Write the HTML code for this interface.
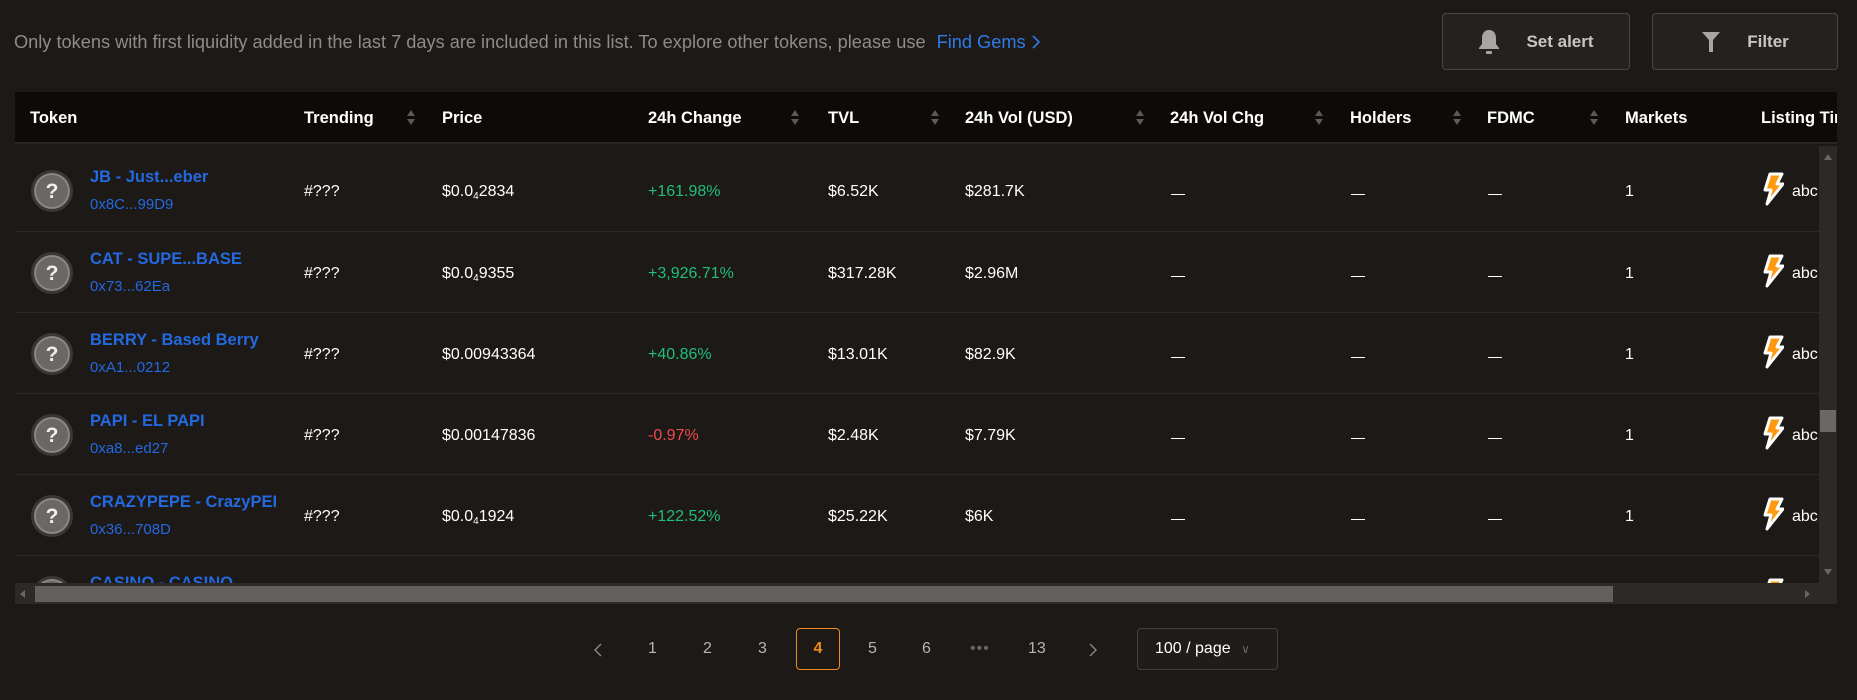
<!DOCTYPE html>
<html><head><meta charset="utf-8"><style>
*{box-sizing:border-box;margin:0;padding:0}
body{width:1857px;height:700px;background:#1c1917;font-family:"Liberation Sans",sans-serif;color:#fff;position:relative;overflow:hidden}
.intro{position:absolute;left:14px;top:32px;font-size:18.2px;color:#8f8b87;white-space:nowrap}
.intro a{color:#2f7bea;margin-left:6px}
.btn{position:absolute;top:13px;height:57px;border:1px solid #4a4643;border-radius:4px;background:#24211f;color:#c9c6c2;font-size:17px;font-weight:bold;display:flex;align-items:center;justify-content:center;gap:26px}
.tbl{position:absolute;left:15px;top:92px;width:1822px;height:512px;overflow:hidden;background:#1c1917}
.hdr{position:absolute;left:0;top:0;width:1822px;height:52px;background:#0d0a07;border-bottom:2px solid #2a2623}
.h{position:absolute;top:17px;font-size:16.5px;font-weight:bold;color:#fff;white-space:nowrap}
.ar{position:absolute;top:17px;width:8px;height:18px}
.ar:before{content:"";position:absolute;left:0;top:1px;border:4px solid transparent;border-bottom:6px solid #5d5955;border-top:0}
.ar:after{content:"";position:absolute;left:0;top:10px;border:4px solid transparent;border-top:6px solid #5d5955;border-bottom:0}
.row{position:absolute;left:0;width:1804px;height:81px;border-top:1px solid #2b2724}
.c{position:absolute;top:33px;font-size:16px;white-space:nowrap;color:#fff}
.ic{position:absolute;left:16px;top:20px;width:42px;height:42px;border-radius:50%;background:#6a6764;border:3px solid #3a3735;box-shadow:inset 0 0 0 2px #8a8784}
.ic span{position:absolute;left:0;right:0;top:7px;text-align:center;font-weight:bold;font-size:21px;color:#eee}
.nm{position:absolute;left:75px;top:18px;font-size:16.5px;font-weight:bold;color:#2369e0;white-space:nowrap}
.ad{position:absolute;left:75px;top:46px;font-size:15px;color:#2369e0}
.g{color:#1fbf7a}.r{color:#ef4b4f}
.dash{position:absolute;top:44px;width:14px;height:1px;background:#fff}
sub{font-size:10px;vertical-align:-3px}
.pg{position:absolute;top:640px;font-size:16px;color:#b8b4b0}
</style></head><body>
<div class="intro">Only tokens with first liquidity added in the last 7 days are included in this list. To explore other tokens, please use <a>Find Gems <svg width="10" height="14" viewBox="0 0 10 14" style="vertical-align:-1px"><path d="M2 1l6 6-6 6" fill="none" stroke="#2f7bea" stroke-width="1.6"/></svg></a></div>
<div class="btn" style="left:1442px;width:188px"><svg width="22" height="26" viewBox="0 0 22 26"><path d="M11 1c-5 0-7 4-7 8v6l-3 4v1h20v-1l-3-4V9c0-4-2-8-7-8z" fill="#a8a5a2"/><rect x="8" y="22" width="6" height="3" rx="1" fill="#a8a5a2"/></svg><span>Set alert</span></div>
<div class="btn" style="left:1652px;width:186px"><svg width="20" height="22" viewBox="0 0 20 22"><path d="M1 1h18l-7 8v12h-4V9z" fill="#a8a5a2"/></svg><span>Filter</span></div>
<div class="tbl">
<div class="hdr">
<div class="h" style="left:15px">Token</div>
<div class="h" style="left:289px">Trending</div><div class="ar" style="left:392px"></div>
<div class="h" style="left:427px">Price</div>
<div class="h" style="left:633px">24h Change</div><div class="ar" style="left:776px"></div>
<div class="h" style="left:813px">TVL</div><div class="ar" style="left:916px"></div>
<div class="h" style="left:950px">24h Vol (USD)</div><div class="ar" style="left:1121px"></div>
<div class="h" style="left:1155px">24h Vol Chg</div><div class="ar" style="left:1300px"></div>
<div class="h" style="left:1335px">Holders</div><div class="ar" style="left:1438px"></div>
<div class="h" style="left:1472px">FDMC</div><div class="ar" style="left:1575px"></div>
<div class="h" style="left:1610px">Markets</div>
<div class="h" style="left:1746px">Listing Time</div>
</div>
<div class="row" style="top:58px;border-top:none"><div class="ic"><span>?</span></div><div class="nm">JB - Just...eber</div><div class="ad">0x8C...99D9</div><div class="c" style="left:289px">#???</div><div class="c" style="left:427px">$0.0<sub>4</sub>2834</div><div class="c g" style="left:633px">+161.98%</div><div class="c" style="left:813px">$6.52K</div><div class="c" style="left:950px">$281.7K</div><div class="dash" style="left:1156px"></div><div class="dash" style="left:1336px"></div><div class="dash" style="left:1473px"></div><div class="c" style="left:1610px">1</div><svg style="position:absolute;left:1747px;top:22px" width="22" height="34" viewBox="0 0 22 34"><path d="M8 2h12l-5 10h6L5 32l4-14H3z" fill="#ff9a10" stroke="#fff" stroke-width="3" stroke-linejoin="round"/></svg><div class="c" style="left:1777px">abc</div></div>
<div class="row" style="top:139px"><div class="ic"><span>?</span></div><div class="nm">CAT - SUPE...BASE</div><div class="ad">0x73...62Ea</div><div class="c" style="left:289px">#???</div><div class="c" style="left:427px">$0.0<sub>4</sub>9355</div><div class="c g" style="left:633px">+3,926.71%</div><div class="c" style="left:813px">$317.28K</div><div class="c" style="left:950px">$2.96M</div><div class="dash" style="left:1156px"></div><div class="dash" style="left:1336px"></div><div class="dash" style="left:1473px"></div><div class="c" style="left:1610px">1</div><svg style="position:absolute;left:1747px;top:22px" width="22" height="34" viewBox="0 0 22 34"><path d="M8 2h12l-5 10h6L5 32l4-14H3z" fill="#ff9a10" stroke="#fff" stroke-width="3" stroke-linejoin="round"/></svg><div class="c" style="left:1777px">abc</div></div>
<div class="row" style="top:220px"><div class="ic"><span>?</span></div><div class="nm">BERRY - Based Berry</div><div class="ad">0xA1...0212</div><div class="c" style="left:289px">#???</div><div class="c" style="left:427px">$0.00943364</div><div class="c g" style="left:633px">+40.86%</div><div class="c" style="left:813px">$13.01K</div><div class="c" style="left:950px">$82.9K</div><div class="dash" style="left:1156px"></div><div class="dash" style="left:1336px"></div><div class="dash" style="left:1473px"></div><div class="c" style="left:1610px">1</div><svg style="position:absolute;left:1747px;top:22px" width="22" height="34" viewBox="0 0 22 34"><path d="M8 2h12l-5 10h6L5 32l4-14H3z" fill="#ff9a10" stroke="#fff" stroke-width="3" stroke-linejoin="round"/></svg><div class="c" style="left:1777px">abc</div></div>
<div class="row" style="top:301px"><div class="ic"><span>?</span></div><div class="nm">PAPI - EL PAPI</div><div class="ad">0xa8...ed27</div><div class="c" style="left:289px">#???</div><div class="c" style="left:427px">$0.00147836</div><div class="c r" style="left:633px">-0.97%</div><div class="c" style="left:813px">$2.48K</div><div class="c" style="left:950px">$7.79K</div><div class="dash" style="left:1156px"></div><div class="dash" style="left:1336px"></div><div class="dash" style="left:1473px"></div><div class="c" style="left:1610px">1</div><svg style="position:absolute;left:1747px;top:22px" width="22" height="34" viewBox="0 0 22 34"><path d="M8 2h12l-5 10h6L5 32l4-14H3z" fill="#ff9a10" stroke="#fff" stroke-width="3" stroke-linejoin="round"/></svg><div class="c" style="left:1777px">abc</div></div>
<div class="row" style="top:382px"><div class="ic"><span>?</span></div><div class="nm">CRAZYPEPE - CrazyPEI</div><div class="ad">0x36...708D</div><div class="c" style="left:289px">#???</div><div class="c" style="left:427px">$0.0<sub>4</sub>1924</div><div class="c g" style="left:633px">+122.52%</div><div class="c" style="left:813px">$25.22K</div><div class="c" style="left:950px">$6K</div><div class="dash" style="left:1156px"></div><div class="dash" style="left:1336px"></div><div class="dash" style="left:1473px"></div><div class="c" style="left:1610px">1</div><svg style="position:absolute;left:1747px;top:22px" width="22" height="34" viewBox="0 0 22 34"><path d="M8 2h12l-5 10h6L5 32l4-14H3z" fill="#ff9a10" stroke="#fff" stroke-width="3" stroke-linejoin="round"/></svg><div class="c" style="left:1777px">abc</div></div>
<div class="row" style="top:463px"><div class="ic"><span>?</span></div><div class="nm">CASINO - CASINO</div><svg style="position:absolute;left:1747px;top:22px" width="22" height="34" viewBox="0 0 22 34"><path d="M8 2h12l-5 10h6L5 32l4-14H3z" fill="#ff9a10" stroke="#fff" stroke-width="3" stroke-linejoin="round"/></svg></div>
<div style="position:absolute;left:1804px;top:54px;width:18px;height:437px;background:#2c2927"></div>
<div style="position:absolute;left:1809px;top:62px;border:4px solid transparent;border-bottom:6px solid #6a6662;border-top:0"></div>
<div style="position:absolute;left:1809px;top:477px;border:4px solid transparent;border-top:6px solid #6a6662;border-bottom:0"></div>
<div style="position:absolute;left:1805px;top:318px;width:16px;height:22px;background:#6a6764"></div>
<div style="position:absolute;left:0;top:491px;width:1822px;height:21px;background:#2c2927"></div>
<div style="position:absolute;left:20px;top:494px;width:1578px;height:16px;background:#63615d"></div>
<div style="position:absolute;left:5px;top:498px;border:4px solid transparent;border-right:5px solid #6a6662;border-left:0"></div>
<div style="position:absolute;left:1790px;top:498px;border:4px solid transparent;border-left:5px solid #6a6662;border-right:0"></div>
</div>
<svg style="position:absolute;left:593px;top:642px" width="10" height="16" viewBox="0 0 10 16"><path d="M8 2L2 8l6 6" fill="none" stroke="#8a8683" stroke-width="1.4"/></svg>
<div class="pg" style="left:648px">1</div>
<div class="pg" style="left:703px">2</div>
<div class="pg" style="left:758px">3</div>
<div style="position:absolute;left:796px;top:628px;width:44px;height:42px;border:1px solid #f08a1c;border-radius:4px;color:#f08a1c;font-weight:bold;font-size:16px;text-align:center;line-height:40px">4</div>
<div class="pg" style="left:868px">5</div>
<div class="pg" style="left:922px">6</div>
<div class="pg" style="left:970px;color:#6a6662;letter-spacing:1px">&bull;&bull;&bull;</div>
<div class="pg" style="left:1028px">13</div>
<svg style="position:absolute;left:1088px;top:642px" width="10" height="16" viewBox="0 0 10 16"><path d="M2 2l6 6-6 6" fill="none" stroke="#8a8683" stroke-width="1.4"/></svg>
<div style="position:absolute;left:1137px;top:628px;width:141px;height:42px;border:1px solid #44403d;border-radius:4px;background:#1f1c1a;font-size:16px;color:#fff;line-height:40px;padding-left:17px">100 / page <span style="color:#6a6662;font-size:12px;margin-left:6px">&#x2228;</span></div>
</body></html>
